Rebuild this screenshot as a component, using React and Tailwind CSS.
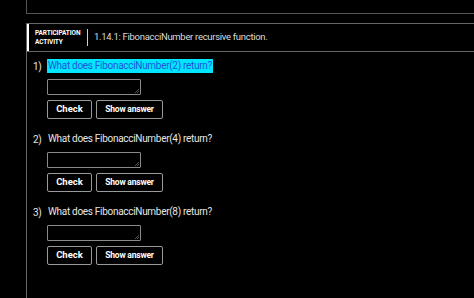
import React from "react";

const questions = [
  { n: 1, text: "What does FibonacciNumber(2) return?", active: true },
  { n: 2, text: "What does FibonacciNumber(4) return?" },
  { n: 3, text: "What does FibonacciNumber(8) return?" },
];

const Question = ({ n, text, active }) => {
  return (
    <div className="flex flex-col">
      <div className="flex items-center h-[14px] text-[10px] tracking-[-0.3px] text-[#e6e6e6]">
        <span className="w-[14px] ml-[6px]">{n})</span>
        <span
          className={
            active
              ? "bg-[#00e6ff] text-[#1f56d8] px-[1px] leading-[14px]"
              : "px-[1px] leading-[14px]"
          }
        >
          {text}
        </span>
      </div>
      <div className="ml-[20px] mt-[6px] relative w-[94px] h-[16px] border border-[#8a8a8a] rounded-[1px]">
        <svg
          className="absolute right-[1px] bottom-[1px]"
          width="5"
          height="5"
          viewBox="0 0 5 5"
        >
          <path d="M5 1 L1 5 M5 3 L3 5" stroke="#777" strokeWidth="0.7" />
        </svg>
      </div>
      <div className="ml-[20px] mt-[5px] flex gap-[4px]">
        <button className="w-[45px] h-[19px] border border-[#9a9a9a] rounded-[2px] text-[9.5px] font-bold text-white">
          Check
        </button>
        <button className="w-[67px] h-[19px] border border-[#9a9a9a] rounded-[2px] text-[8.5px] font-bold text-white tracking-[-0.2px]">
          Show answer
        </button>
      </div>
    </div>
  );
};

const App = () => {
  return (
    <div className="w-[474px] h-[298px] bg-black overflow-hidden font-['Roboto',sans-serif]">
      <div className="ml-[26px] h-[14px] border-l border-b border-[#555]" />
      <div className="ml-[26px] mt-[9px] h-[275px] border-l border-t border-[#666]">
        <div className="flex items-center h-[28px] border-b border-[#666]">
          <div className="w-[2px] h-full bg-white" />
          <div className="ml-[6px] w-[52px] text-[6.5px] font-bold leading-[9px] text-white tracking-[-0.1px]">
            PARTICIPATION
            <br />
            ACTIVITY
          </div>
          <div className="w-[1px] h-[17px] bg-[#cfcfcf]" />
          <div className="ml-[6px] text-[9.5px] tracking-[-0.3px] text-[#dcdcdc]">
            1.14.1: FibonacciNumber recursive function.
          </div>
        </div>
        <div className="flex flex-col gap-[13px] pt-[7px]">
          {questions.map((q) => (
            <Question key={q.n} {...q} />
          ))}
        </div>
      </div>
    </div>
  );
};

export default App;
